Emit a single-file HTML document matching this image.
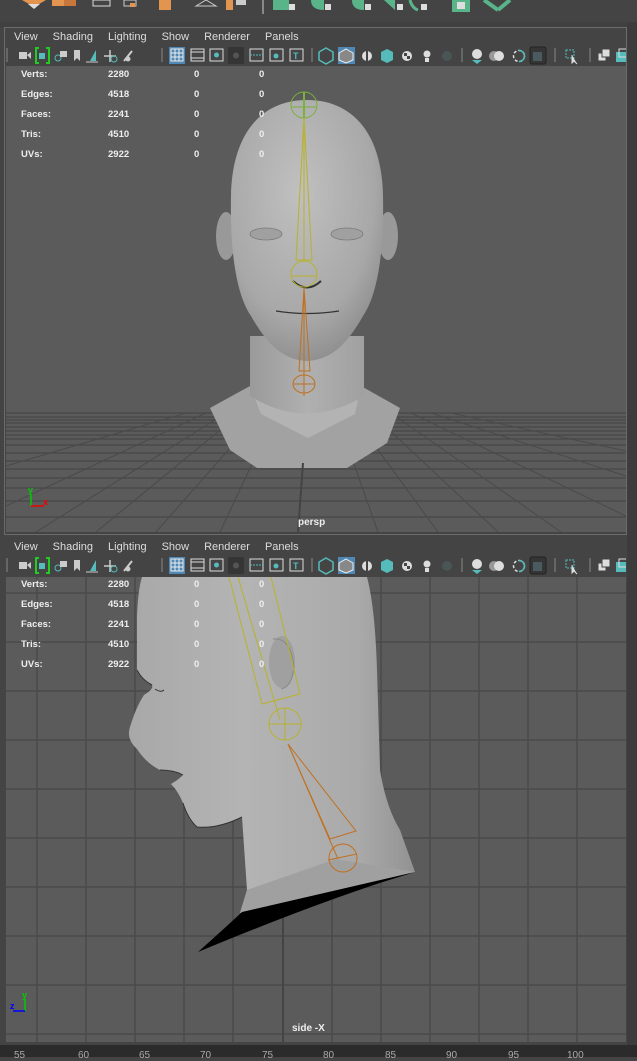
<!DOCTYPE html>
<html><head><meta charset="utf-8"><style>
*{margin:0;padding:0;box-sizing:border-box}
body{width:637px;height:1057px;background:#444;position:relative;overflow:hidden;font-family:"Liberation Sans",sans-serif}
.abs{position:absolute}
.menu{position:absolute;left:14px;font-size:11px;color:#ddd;white-space:nowrap}
.menu span{margin-right:15px}
.stats{position:absolute;left:0;font-size:9.5px;font-weight:bold;color:#eee}
.stats div{position:absolute;white-space:nowrap}
.vp{position:absolute;left:6px;width:620px;background:#5b5b5b;overflow:hidden}
</style></head><body>
<svg class="abs" style="left:0;top:0" width="637" height="22">
<rect width="637" height="22" fill="#444"/>
<path d="M22 0 L34 7 L46 0Z" fill="#e3944f"/><path d="M28 4 L34 9 L40 4" fill="#ddd"/>
<rect x="52" y="0" width="12" height="6" fill="#e3944f"/><rect x="64" y="0" width="12" height="6" fill="#c7773c"/>
<rect x="93" y="0" width="17" height="6" fill="none" stroke="#ddd"/>
<rect x="124" y="0" width="12" height="6" fill="none" stroke="#ccc"/><rect x="130" y="3" width="5" height="4" fill="#e3944f"/>
<rect x="159" y="0" width="12" height="10" fill="#e3944f"/>
<path d="M196 6 L206 0 L216 6Z" fill="none" stroke="#ccc"/>
<rect x="226" y="0" width="7" height="10" fill="#e3944f"/><rect x="236" y="0" width="10" height="5" fill="#ccc"/>
<rect x="262" y="0" width="2" height="14" fill="#888"/>
<rect x="273" y="0" width="16" height="10" fill="#5ab48a"/><rect x="289" y="4" width="6" height="6" fill="#ddd"/>
<path d="M311 0 Q311 10 324 10 L324 0Z" fill="#5ab48a"/><rect x="325" y="4" width="6" height="6" fill="#ddd"/>
<path d="M352 0 Q352 10 364 10 L364 0Z" fill="#5ab48a"/><rect x="365" y="4" width="6" height="6" fill="#ddd"/>
<path d="M384 0 L395 10 L395 0Z" fill="#5ab48a"/><rect x="397" y="4" width="6" height="6" fill="#ddd"/>
<path d="M410 0 Q412 8 418 10" stroke="#5ab48a" stroke-width="3" fill="none"/><rect x="421" y="4" width="6" height="6" fill="#ddd"/>
<rect x="452" y="0" width="18" height="12" fill="#5ab48a"/><rect x="457" y="2" width="8" height="7" fill="#ddd"/>
<path d="M484 0 L498 10 M510 0 L498 10" stroke="#5ab48a" stroke-width="4"/>
</svg>
<div class="abs" style="left:0;top:22px;width:637px;height:5px;background:#404040"></div>

<div class="abs" style="left:4px;top:27px;width:623px;height:508px;border:1px solid #6c6c6c;background:#444"></div>
<div class="abs" style="left:627px;top:22px;width:10px;height:1035px;background:#3c3c3c"></div>
<div class="menu" style="top:31px"><span>View</span><span>Shading</span><span>Lighting</span><span>Show</span><span>Renderer</span><span>Panels</span></div>
<svg class="abs" id="tb1" style="left:6px;top:46px" width="620" height="20"></svg>

<div class="vp" style="top:66px;height:466px">
<svg width="620" height="466" style="position:absolute;left:0;top:0">
<g stroke="#474747" stroke-width="1.3">
<line x1="0" y1="347" x2="620" y2="347"/><line x1="0" y1="351" x2="620" y2="351"/><line x1="0" y1="354" x2="620" y2="354"/>
<line x1="0" y1="357" x2="620" y2="357"/><line x1="0" y1="361" x2="620" y2="361"/><line x1="0" y1="365" x2="620" y2="365"/>
<line x1="0" y1="369" x2="620" y2="369"/><line x1="0" y1="373" x2="620" y2="373"/><line x1="0" y1="379" x2="620" y2="379"/>
<line x1="0" y1="387" x2="620" y2="387"/><line x1="0" y1="395" x2="620" y2="395"/><line x1="0" y1="403" x2="620" y2="403"/>
<line x1="0" y1="412" x2="620" y2="412"/><line x1="0" y1="422" x2="620" y2="422"/><line x1="0" y1="435" x2="620" y2="435"/>
<line x1="0" y1="451" x2="620" y2="451"/>
</g>
<rect x="0" y="300" width="620" height="46" fill="#5b5b5b"/>
<g stroke="#4a4a4a" stroke-width="1">
<line x1="-600" y1="500" x2="0" y2="349"/>
<line x1="0" y1="400" x2="180" y2="347"/><line x1="0" y1="440" x2="200" y2="347"/><line x1="30" y1="466" x2="220" y2="347"/>
<line x1="90" y1="466" x2="235" y2="347"/><line x1="150" y1="466" x2="255" y2="347"/><line x1="214" y1="466" x2="270" y2="347"/>
<line x1="372" y1="466" x2="330" y2="347"/><line x1="432" y1="466" x2="345" y2="347"/><line x1="492" y1="466" x2="365" y2="347"/>
<line x1="555" y1="466" x2="385" y2="347"/><line x1="620" y1="450" x2="405" y2="347"/><line x1="620" y1="410" x2="425" y2="347"/>
<line x1="620" y1="385" x2="445" y2="347"/>
</g>
<defs>
<radialGradient id="hg" cx="0.45" cy="0.35" r="0.7"><stop offset="0" stop-color="#c0c0c0"/><stop offset="0.7" stop-color="#a8a8a8"/><stop offset="1" stop-color="#8a8a8a"/></radialGradient>
<linearGradient id="sg" x1="0" y1="0" x2="1" y2="0"><stop offset="0" stop-color="#9a9a9a"/><stop offset="0.5" stop-color="#b0b0b0"/><stop offset="1" stop-color="#a0a0a0"/></linearGradient>
</defs>
<path d="M204 342 L244 320 L355 320 L394 342 L381 377 L341 402 L251 402 L224 384 Z" fill="#a2a2a2"/>
<path d="M244 320 L355 320 L349 348 L302 372 L255 348Z" fill="#b3b3b3"/>
<path d="M244 270 L244 330 Q300 365 358 330 L358 270Z" fill="url(#sg)"/>
<ellipse cx="220" cy="170" rx="10" ry="24" fill="#999"/><ellipse cx="382" cy="170" rx="10" ry="24" fill="#999"/>
<path d="M301 34 C255 34 226 68 225 130 C224 175 228 225 245 250 C262 280 278 294 301 295 C324 294 340 280 357 250 C374 225 378 175 377 130 C376 68 347 34 301 34Z" fill="url(#hg)"/>
<ellipse cx="260" cy="168" rx="16" ry="6" fill="#a0a0a0" stroke="#7a7a7a" stroke-width="0.8"/>
<ellipse cx="341" cy="168" rx="16" ry="6" fill="#a0a0a0" stroke="#7a7a7a" stroke-width="0.8"/>
<path d="M287 215 Q301 228 315 215" stroke="#333" stroke-width="2" fill="none"/>
<path d="M270 245 Q301 250 333 245" stroke="#333" stroke-width="1.2" fill="none"/>
<circle cx="298" cy="39" r="13" fill="none" stroke="#7ab13a" stroke-width="1"/>
<line x1="298" y1="26" x2="298" y2="52" stroke="#7ab13a" stroke-width="2"/>
<line x1="285" y1="41" x2="311" y2="41" stroke="#7ab13a"/>
<path d="M298 52 L290 194 L306 194 Z M298 52 L298 194" stroke="#b8b22c" fill="none"/>
<circle cx="298" cy="208" r="13" fill="none" stroke="#b8b22c"/>
<line x1="285" y1="210" x2="311" y2="210" stroke="#b8b22c"/>
<path d="M298 222 L293 305 L304 305 Z M298 222 L298 330" stroke="#c07020" fill="none"/>
<ellipse cx="298" cy="318" rx="11" ry="9" fill="none" stroke="#c07020"/>
<line x1="287" y1="318" x2="309" y2="318" stroke="#c07020"/>
<line x1="297" y1="397" x2="292" y2="466" stroke="#444" stroke-width="2"/>
<line x1="25" y1="440" x2="25" y2="428" stroke="#0c0" stroke-width="1.5"/>
<line x1="25" y1="440" x2="38" y2="440" stroke="#e00" stroke-width="1.5"/>
<text x="22" y="427" font-size="9" fill="#0c0" font-weight="bold" font-family="Liberation Sans">y</text>
<text x="37" y="439" font-size="9" fill="#e00" font-weight="bold" font-family="Liberation Sans">x</text>
<text x="292" y="459" font-size="10" fill="#eee" font-weight="bold" font-family="Liberation Sans">persp</text>
</svg>
</div>
<div class="stats" style="top:69px">
<div style="left:21px;top:0">Verts:</div><div style="left:108px;top:0">2280</div><div style="left:194px;top:0">0</div><div style="left:259px;top:0">0</div>
<div style="left:21px;top:20px">Edges:</div><div style="left:108px;top:20px">4518</div><div style="left:194px;top:20px">0</div><div style="left:259px;top:20px">0</div>
<div style="left:21px;top:40px">Faces:</div><div style="left:108px;top:40px">2241</div><div style="left:194px;top:40px">0</div><div style="left:259px;top:40px">0</div>
<div style="left:21px;top:60px">Tris:</div><div style="left:108px;top:60px">4510</div><div style="left:194px;top:60px">0</div><div style="left:259px;top:60px">0</div>
<div style="left:21px;top:80px">UVs:</div><div style="left:108px;top:80px">2922</div><div style="left:194px;top:80px">0</div><div style="left:259px;top:80px">0</div>
</div>

<div class="abs" style="left:4px;top:537px;width:623px;height:508px;background:#444"></div>
<div class="menu" style="top:541px"><span>View</span><span>Shading</span><span>Lighting</span><span>Show</span><span>Renderer</span><span>Panels</span></div>
<svg class="abs" id="tb2" style="left:6px;top:556px" width="620" height="20"></svg>

<div class="vp" style="top:577px;height:465px">
<svg width="620" height="465" style="position:absolute;left:0;top:0">
<g stroke="#4a4a4a" stroke-width="1.5">
<line x1="31" y1="0" x2="31" y2="465"/><line x1="80" y1="0" x2="80" y2="465"/><line x1="129" y1="0" x2="129" y2="465"/>
<line x1="178" y1="0" x2="178" y2="465"/><line x1="227" y1="0" x2="227" y2="465"/><line x1="326" y1="0" x2="326" y2="465"/>
<line x1="375" y1="0" x2="375" y2="465"/><line x1="424" y1="0" x2="424" y2="465"/><line x1="473" y1="0" x2="473" y2="465"/>
<line x1="522" y1="0" x2="522" y2="465"/><line x1="571" y1="0" x2="571" y2="465"/>
<line x1="0" y1="16" x2="620" y2="16"/><line x1="0" y1="65" x2="620" y2="65"/><line x1="0" y1="114" x2="620" y2="114"/>
<line x1="0" y1="163" x2="620" y2="163"/><line x1="0" y1="212" x2="620" y2="212"/><line x1="0" y1="261" x2="620" y2="261"/>
<line x1="0" y1="310" x2="620" y2="310"/><line x1="0" y1="359" x2="620" y2="359"/><line x1="0" y1="408" x2="620" y2="408"/>
<line x1="0" y1="457" x2="620" y2="457"/>
</g>
<line x1="277" y1="0" x2="277" y2="465" stroke="#444" stroke-width="2"/>
<defs><linearGradient id="sh" x1="0" y1="0" x2="1" y2="0"><stop offset="0" stop-color="#a8a8a8"/><stop offset="0.4" stop-color="#b4b4b4"/><stop offset="0.8" stop-color="#aaa"/><stop offset="1" stop-color="#929292"/></linearGradient></defs>
<path d="M136 0 L361 0 Q369 30 371 93 L374 193 Q380 230 394 253 L409 295 L234 336 L241 313 L236 240 Q212 252 191 250 Q182 242 177 226 Q172 214 165 207 Q172 203 177 198 Q168 193 154 193 Q140 186 131 172 Q120 162 124 150 Q130 130 138 118 Q148 112 146 108 Q136 103 131 93 L131 40 Q132 12 136 0Z" fill="url(#sh)"/>
<path d="M131 93 Q136 103 146 108 M154 193 Q168 193 177 198 M177 226 Q182 242 191 250 Q212 252 236 240" stroke="#333" stroke-width="1" fill="none"/>
<path d="M241 313 L330 282 L409 295 L234 336Z" fill="#a0a0a0"/>
<path d="M192 375 Q220 350 236 335 L409 295 L380 304 Q300 330 192 375Z" fill="#000"/>
<ellipse cx="276" cy="85" rx="13" ry="26" fill="#a0a0a0"/>
<path d="M267 62 Q285 60 288 90 Q286 110 275 112" stroke="#888" fill="none"/>
<path d="M149 112 Q155 116 158 113" stroke="#333" fill="none"/>
<path d="M223 0 L256 127 L294 117 L265 0 M232 0 L274 143" stroke="#b8b22c" fill="none"/>
<circle cx="279" cy="147" r="16" fill="none" stroke="#b8b22c"/>
<line x1="263" y1="147" x2="296" y2="147" stroke="#b8b22c"/><line x1="279" y1="131" x2="279" y2="163" stroke="#b8b22c"/>
<path d="M282 167 L324 262 L350 254 Z M282 167 L332 282" stroke="#c07020" fill="none"/>
<circle cx="337" cy="281" r="14" fill="none" stroke="#c07020"/>
<line x1="322" y1="283" x2="351" y2="277" stroke="#c07020"/>
<line x1="19" y1="434" x2="19" y2="422" stroke="#0c0" stroke-width="1.5"/>
<line x1="19" y1="434" x2="7" y2="434" stroke="#00f" stroke-width="1.5"/>
<text x="16" y="421" font-size="9" fill="#0c0" font-weight="bold" font-family="Liberation Sans">y</text>
<text x="4" y="432" font-size="9" fill="#00f" font-weight="bold" font-family="Liberation Sans">z</text>
<text x="286" y="454" font-size="10" fill="#eee" font-weight="bold" font-family="Liberation Sans">side -X</text>
</svg>
</div>
<div class="stats" style="top:579px">
<div style="left:21px;top:0">Verts:</div><div style="left:108px;top:0">2280</div><div style="left:194px;top:0">0</div><div style="left:259px;top:0">0</div>
<div style="left:21px;top:20px">Edges:</div><div style="left:108px;top:20px">4518</div><div style="left:194px;top:20px">0</div><div style="left:259px;top:20px">0</div>
<div style="left:21px;top:40px">Faces:</div><div style="left:108px;top:40px">2241</div><div style="left:194px;top:40px">0</div><div style="left:259px;top:40px">0</div>
<div style="left:21px;top:60px">Tris:</div><div style="left:108px;top:60px">4510</div><div style="left:194px;top:60px">0</div><div style="left:259px;top:60px">0</div>
<div style="left:21px;top:80px">UVs:</div><div style="left:108px;top:80px">2922</div><div style="left:194px;top:80px">0</div><div style="left:259px;top:80px">0</div>
</div>

<div class="abs" style="left:0;top:1045px;width:637px;height:12px;background:#2b2b2b"></div>
<div class="abs" style="left:0;top:1050px;width:637px;font-size:10px;color:#aaa;white-space:nowrap">
<span style="position:absolute;left:14px">55</span><span style="position:absolute;left:78px">60</span><span style="position:absolute;left:139px">65</span><span style="position:absolute;left:200px">70</span><span style="position:absolute;left:262px">75</span><span style="position:absolute;left:323px">80</span><span style="position:absolute;left:385px">85</span><span style="position:absolute;left:446px">90</span><span style="position:absolute;left:508px">95</span><span style="position:absolute;left:567px">100</span>
</div>

<script>
function tb(id){
 var s=document.getElementById(id),h='';
 h+='<rect x="0" y="2" width="2" height="14" fill="#666"/>';
 h+='<rect x="13" y="6" width="8" height="7" fill="#ccc"/><path d="M21 9 L25 6 L25 13Z" fill="#ccc"/>';
 h+='<path d="M33 2 L30 2 L30 17 L33 17 M40 2 L43 2 L43 17 L40 17" stroke="#2c2" stroke-width="2" fill="none"/><rect x="33" y="7" width="6" height="6" fill="#5bb"/>';
 h+='<circle cx="52" cy="12" r="3" stroke="#5bb" fill="none"/><rect x="54" y="5" width="7" height="6" fill="#ccc"/>';
 h+='<path d="M68 4 L74 4 L74 15 L71 12 L68 15Z" fill="#ccc"/>';
 h+='<path d="M84 15 L90 4 L90 15Z" fill="#5bb"/><line x1="80" y1="16" x2="92" y2="16" stroke="#ccc"/>';
 h+='<path d="M104 4 L104 16 M98 10 L110 10" stroke="#ccc" stroke-width="1.5"/><circle cx="108" cy="13" r="3" stroke="#5bb" fill="none"/>';
 h+='<path d="M118 15 L126 5" stroke="#ccc" stroke-width="2"/><circle cx="122" cy="13" r="2.5" fill="#ccc"/>';
 h+='<rect x="155" y="2" width="2" height="14" fill="#666"/>';
 h+='<rect x="163" y="1" width="16" height="17" fill="#4f88b4"/><rect x="165" y="3" width="12" height="12" fill="none" stroke="#eee"/><path d="M169 3 V15 M173 3 V15 M165 7 H177 M165 11 H177" stroke="#eee"/>';
 h+='<rect x="185" y="3" width="13" height="12" fill="none" stroke="#ddd"/><path d="M185 6 H198 M185 12 H198" stroke="#ddd"/>';
 h+='<rect x="204" y="3" width="13" height="12" fill="none" stroke="#ddd"/><circle cx="210.5" cy="9" r="2.5" fill="#5bb"/>';
 h+='<rect x="222" y="1" width="16" height="17" rx="2" fill="#353535"/><circle cx="230" cy="9.5" r="3" fill="#555"/>';
 h+='<rect x="244" y="3" width="13" height="12" fill="none" stroke="#ddd"/><path d="M244 9 H257" stroke="#5bb" stroke-dasharray="2 1"/>';
 h+='<rect x="264" y="3" width="13" height="12" fill="none" stroke="#ddd"/><circle cx="270" cy="10" r="2.5" fill="#5bb"/>';
 h+='<rect x="284" y="3" width="13" height="12" fill="none" stroke="#ddd"/><text x="287" y="13" font-size="9" font-weight="bold" fill="#5bb" font-family="Liberation Sans">T</text>';
 h+='<rect x="305" y="2" width="2" height="14" fill="#666"/>';
 h+='<path d="M320 2 L327 6 L327 14 L320 18 L313 14 L313 6Z" fill="none" stroke="#5bb" stroke-width="1.5"/>';
 h+='<rect x="332" y="1" width="17" height="17" fill="#4f88b4"/><path d="M340 3 L347 7 L347 14 L340 17 L333 14 L333 7Z" fill="#888" stroke="#eee"/>';
 h+='<circle cx="361" cy="10" r="5" fill="#ddd"/><path d="M361 5 V15" stroke="#444" stroke-width="2"/>';
 h+='<path d="M381 3 L387 6 L387 14 L381 17 L375 14 L375 6Z" fill="#5bb"/>';
 h+='<circle cx="401" cy="10" r="5" fill="#ddd"/><rect x="398" y="7" width="3" height="3" fill="#444"/><rect x="401" y="10" width="3" height="3" fill="#444"/>';
 h+='<circle cx="421" cy="8" r="3.5" fill="#ddd"/><rect x="419" y="12" width="4" height="4" fill="#ddd"/>';
 h+='<circle cx="441" cy="10" r="5" fill="#4a5555"/>';
 h+='<rect x="455" y="2" width="2" height="14" fill="#666"/>';
 h+='<circle cx="471" cy="8" r="5" fill="#ddd"/><path d="M466 14 L476 14 L471 18Z" fill="#5bb"/>';
 h+='<circle cx="488" cy="10" r="5" fill="#999"/><circle cx="493" cy="10" r="5" fill="#ddd"/>';
 h+='<circle cx="513" cy="10" r="5.5" fill="none" stroke="#ddd" stroke-width="1.5" stroke-dasharray="3 2"/><path d="M513 4.5 A5.5 5.5 0 0 1 513 15.5" stroke="#5bb" stroke-width="1.5" fill="none"/>';
 h+='<rect x="524" y="1" width="16" height="17" rx="2" fill="#353535" stroke="#222"/><rect x="527" y="6" width="9" height="9" fill="#4a5a5f"/>';
 h+='<rect x="548" y="2" width="2" height="14" fill="#666"/>';
 h+='<rect x="560" y="4" width="8" height="8" fill="none" stroke="#5bb" stroke-dasharray="2 1"/><path d="M566 9 L566 17 L568 15 L571 18" fill="#ddd" stroke="#ddd"/>';
 h+='<rect x="583" y="2" width="2" height="14" fill="#666"/>';
 h+='<rect x="592" y="7" width="8" height="8" fill="#ddd" stroke="#444"/><rect x="596" y="3" width="8" height="8" fill="#ddd" stroke="#444"/>';
 h+='<rect x="610" y="6" width="10" height="10" fill="#5bb"/><rect x="613" y="3" width="8" height="8" fill="none" stroke="#ddd"/>';
 s.innerHTML=h;
}
tb('tb1');tb('tb2');
</script>
</body></html>
